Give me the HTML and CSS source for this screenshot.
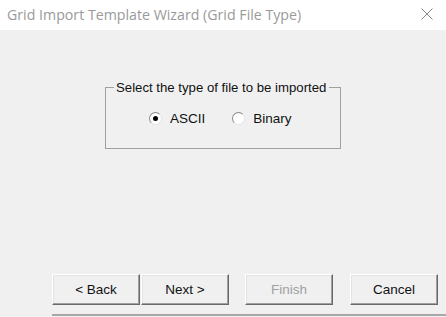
FILE: index.html
```html
<!DOCTYPE html>
<html lang="en">
<head>
    <meta charset="UTF-8">
    <title>Grid Import Template Wizard</title>
    <link rel="stylesheet" href="styles.css">
</head>
<body>
    <div class="window">
        <div class="title-bar">
            <span class="title">Grid Import Template Wizard (Grid File Type)</span>
            <svg class="close" width="12" height="12" viewBox="0 0 12 12">
                <path d="M0.5 0.5 L11.5 11.5 M11.5 0.5 L0.5 11.5" stroke="#8a8a8a" stroke-width="1" fill="none"/>
            </svg>
        </div>
        <div class="content">
            <fieldset class="group">
                <legend>Select the type of file to be imported</legend>
                <div class="options">
                    <label class="radio"><span class="dot checked"></span>ASCII</label>
                    <label class="radio"><span class="dot"></span>Binary</label>
                </div>
            </fieldset>
            <div class="buttons">
                <div class="pair">
                    <button class="btn">&lt; Back</button>
                    <button class="btn">Next &gt;</button>
                </div>
                <button class="btn disabled">Finish</button>
                <button class="btn">Cancel</button>
            </div>
            <div class="bottom-line"></div>
        </div>
    </div>
</body>
</html>
```
FILE: styles.css
```css
body {
    margin: 0;
    background: #f0f0f0;
    font-family: "Liberation Sans", Arial, sans-serif;
}

.window {
    width: 446px;
    height: 317px;
    display: flex;
    flex-direction: column;
    overflow: hidden;
}

.title-bar {
    height: 30px;
    flex-shrink: 0;
    background: #ffffff;
    display: flex;
    align-items: center;
    justify-content: space-between;
    padding: 0 13px 0 7px;
}

.title {
    font-family: "Open Sans", "Noto Sans", sans-serif;
    font-size: 14.2px;
    color: #9a9a9a;
    margin-top: -1px;
}

.close {
    margin-bottom: 2px;
}

.content {
    flex: 1;
    background: #f0f0f0;
    padding-top: 50px;
    display: flex;
    flex-direction: column;
}

.group {
    margin: 0 0 0 105px;
    width: 236px;
    height: 69px;
    box-sizing: border-box;
    border: 1px solid #a0a0a0;
    padding: 0;
    flex-shrink: 0;
}

.group legend {
    font-size: 13.2px;
    color: #111;
    padding: 0 3px 0 2px;
    margin-left: 8px;
}

.options {
    display: flex;
    padding: 16px 0 0 43px;
    gap: 27px;
}

.radio {
    display: flex;
    align-items: center;
    font-size: 13.5px;
    color: #111;
}

.dot {
    width: 11px;
    height: 11px;
    border-radius: 50%;
    background: #fff;
    border: 1px solid;
    border-color: #8a8a8a #e4e4e4 #e4e4e4 #8a8a8a;
    margin-right: 8px;
    position: relative;
}

.dot.checked::after {
    content: "";
    position: absolute;
    left: 3px;
    top: 3px;
    width: 5px;
    height: 5px;
    border-radius: 50%;
    background: #000;
}

.buttons {
    margin-top: 125px;
    display: flex;
    padding-left: 52px;
    flex-shrink: 0;
}

.pair {
    display: flex;
    gap: 1px;
    margin-right: 16px;
}

.btn {
    width: 88px;
    height: 31px;
    flex-shrink: 0;
    background: #f0f0f0;
    font-family: "Liberation Sans", Arial, sans-serif;
    font-size: 13.5px;
    color: #111;
    border: 1px solid;
    border-color: #ffffff #696969 #696969 #ffffff;
    box-shadow: inset -1px -1px 0 #a0a0a0, inset 1px 1px 0 #e3e3e3;
    margin-right: 17px;
    padding: 0;
}

.pair .btn {
    margin-right: 0;
}

.btn.disabled {
    color: #a0a0a0;
}

.bottom-line {
    margin: 9px 0 0 52px;
    border-top: 2px solid #a8a8a8;
}
```
